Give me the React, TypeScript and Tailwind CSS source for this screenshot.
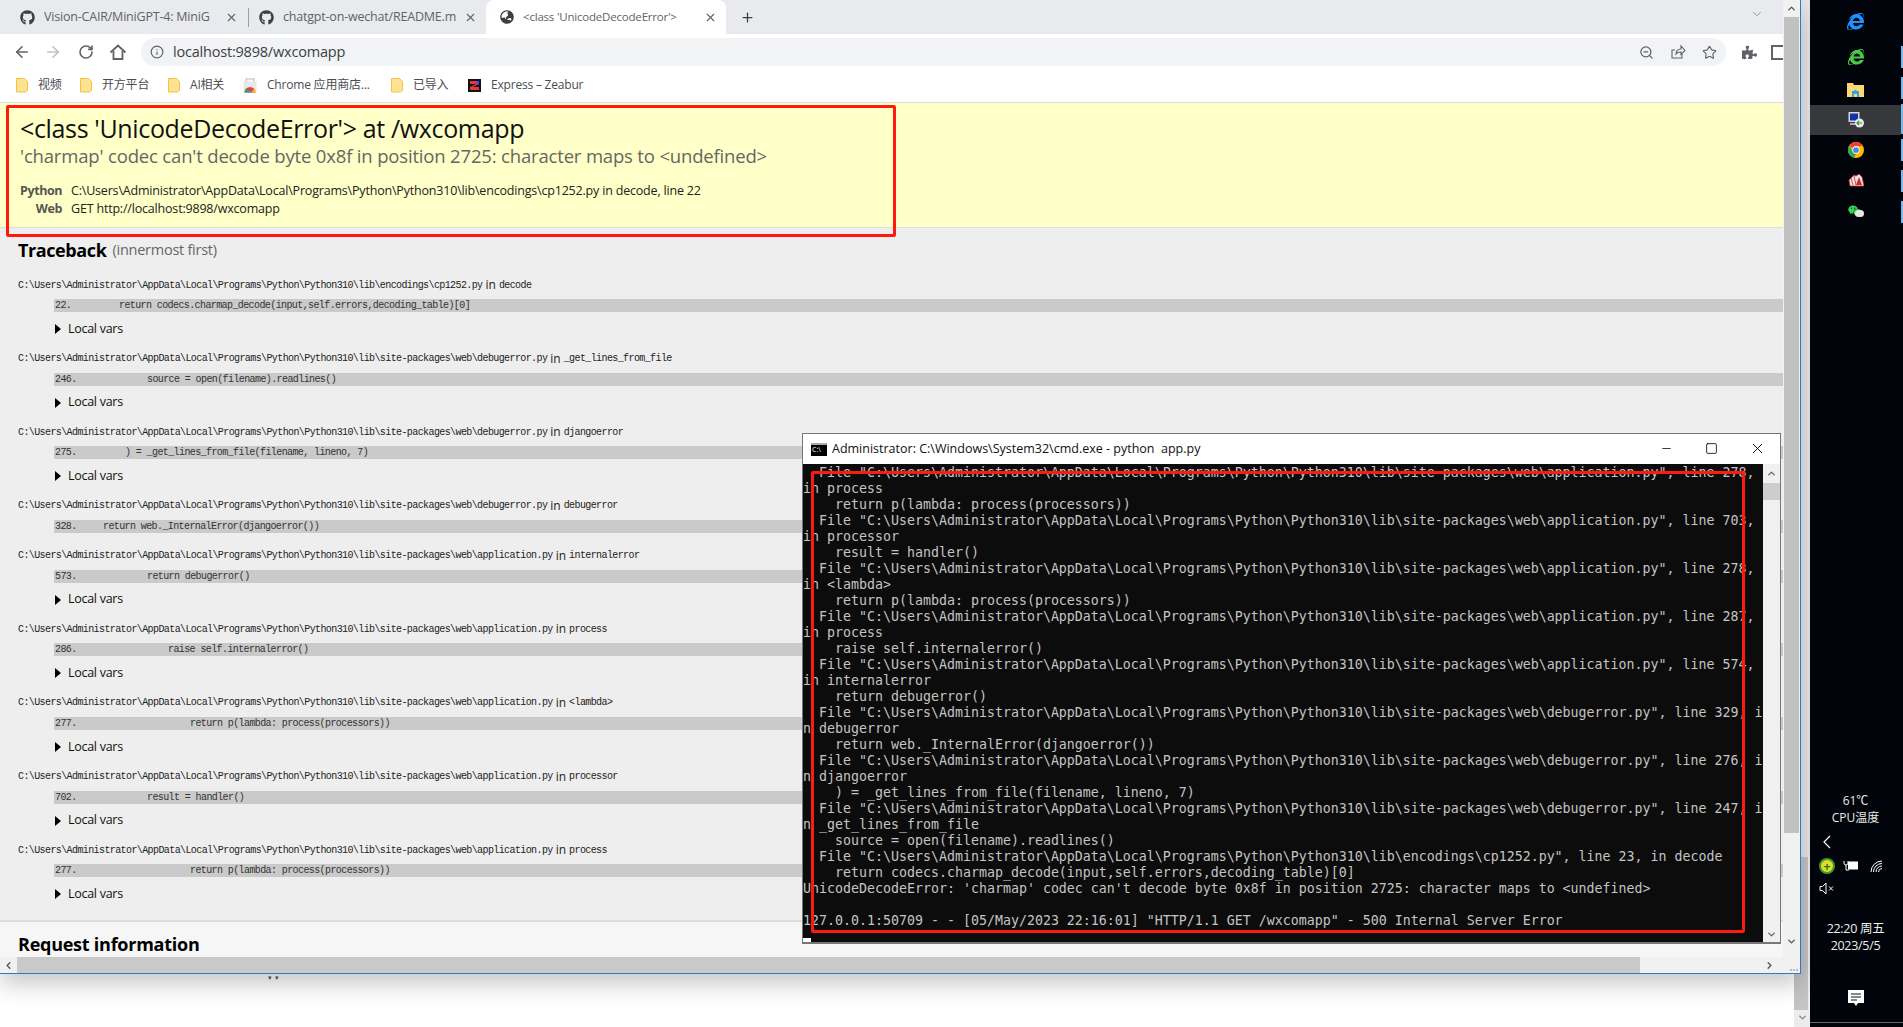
import React from "react";
import { ArrowLeft, ArrowRight, RotateCw, Info, ZoomOut, Star, X, Plus, ChevronDown, ChevronUp, ChevronLeft, ChevronRight, Minus, Square } from "lucide-react";
import { FaGithub, FaGlobeAsia, FaPuzzlePiece, FaInternetExplorer, FaWeixin } from "react-icons/fa";

const sans = "font-['Open_Sans','Noto_Sans_CJK_SC',sans-serif]";
const mono = "font-['Liberation_Mono',monospace] text-[10px] tracking-[-0.6px]";

const frames = [
  { path: "C:\\Users\\Administrator\\AppData\\Local\\Programs\\Python\\Python310\\lib\\encodings\\cp1252.py", fn: "decode", no: "22.", code: "return codecs.charmap_decode(input,self.errors,decoding_table)[0]", cls: "ml-[44px]", vars: true },
  { path: "C:\\Users\\Administrator\\AppData\\Local\\Programs\\Python\\Python310\\lib\\site-packages\\web\\debugerror.py", fn: "_get_lines_from_file", no: "246.", code: "source = open(filename).readlines()", cls: "ml-[72px]", vars: true },
  { path: "C:\\Users\\Administrator\\AppData\\Local\\Programs\\Python\\Python310\\lib\\site-packages\\web\\debugerror.py", fn: "djangoerror", no: "275.", code: ") = _get_lines_from_file(filename, lineno, 7)", cls: "ml-[50px]", vars: true },
  { path: "C:\\Users\\Administrator\\AppData\\Local\\Programs\\Python\\Python310\\lib\\site-packages\\web\\debugerror.py", fn: "debugerror", no: "328.", code: "return web._InternalError(djangoerror())", cls: "ml-[28px]", vars: false },
  { path: "C:\\Users\\Administrator\\AppData\\Local\\Programs\\Python\\Python310\\lib\\site-packages\\web\\application.py", fn: "internalerror", no: "573.", code: "return debugerror()", cls: "ml-[72px]", vars: true },
  { path: "C:\\Users\\Administrator\\AppData\\Local\\Programs\\Python\\Python310\\lib\\site-packages\\web\\application.py", fn: "process", no: "286.", code: "raise self.internalerror()", cls: "ml-[93px]", vars: true },
  { path: "C:\\Users\\Administrator\\AppData\\Local\\Programs\\Python\\Python310\\lib\\site-packages\\web\\application.py", fn: "<lambda>", no: "277.", code: "return p(lambda: process(processors))", cls: "ml-[115px]", vars: true },
  { path: "C:\\Users\\Administrator\\AppData\\Local\\Programs\\Python\\Python310\\lib\\site-packages\\web\\application.py", fn: "processor", no: "702.", code: "result = handler()", cls: "ml-[72px]", vars: true },
  { path: "C:\\Users\\Administrator\\AppData\\Local\\Programs\\Python\\Python310\\lib\\site-packages\\web\\application.py", fn: "process", no: "277.", code: "return p(lambda: process(processors))", cls: "ml-[115px]", vars: true },
];

const P = "C:\\Users\\Administrator\\AppData\\Local\\Programs\\Python\\Python310\\lib";
const term = [
  `  File "${P}\\site-packages\\web\\application.py", line 278,`,
  `in process`,
  `    return p(lambda: process(processors))`,
  `  File "${P}\\site-packages\\web\\application.py", line 703,`,
  `in processor`,
  `    result = handler()`,
  `  File "${P}\\site-packages\\web\\application.py", line 278,`,
  `in <lambda>`,
  `    return p(lambda: process(processors))`,
  `  File "${P}\\site-packages\\web\\application.py", line 287,`,
  `in process`,
  `    raise self.internalerror()`,
  `  File "${P}\\site-packages\\web\\application.py", line 574,`,
  `in internalerror`,
  `    return debugerror()`,
  `  File "${P}\\site-packages\\web\\debugerror.py", line 329, i`,
  `n debugerror`,
  `    return web._InternalError(djangoerror())`,
  `  File "${P}\\site-packages\\web\\debugerror.py", line 276, i`,
  `n djangoerror`,
  `    ) = _get_lines_from_file(filename, lineno, 7)`,
  `  File "${P}\\site-packages\\web\\debugerror.py", line 247, i`,
  `n _get_lines_from_file`,
  `    source = open(filename).readlines()`,
  `  File "${P}\\encodings\\cp1252.py", line 23, in decode`,
  `    return codecs.charmap_decode(input,self.errors,decoding_table)[0]`,
  `UnicodeDecodeError: 'charmap' codec can't decode byte 0x8f in position 2725: character maps to <undefined>`,
  ``,
  `127.0.0.1:50709 - - [05/May/2023 22:16:01] "HTTP/1.1 GET /wxcomapp" - 500 Internal Server Error`,
];

function Tab({ icon, title, active, cls }: { icon: React.ReactNode; title: string; active?: boolean; cls: string }) {
  return (
    <div className={`flex h-full items-center ${cls} ${active ? "bg-white rounded-t-lg" : ""}`}>
      <span className="w-[15px] h-[15px] flex items-center justify-center text-[#3c4043]">{icon}</span>
      <span className={`ml-[9px] w-[174px] overflow-hidden whitespace-nowrap text-[#5f6368] ${active ? "text-[11.5px]" : "text-[12.5px]"} tracking-[-0.2px]`}>{title}</span>
      <X size={13} className="ml-[7px] text-[#5f6368]" strokeWidth={2} />
    </div>
  );
}

function Folder() {
  return (
    <svg width="12" height="15" viewBox="0 0 12 15" className="shrink-0">
      <path d="M0.5 0.5h8l3 3v9l-2 1.500h-9z" fill="#fde293" stroke="#f5c242" strokeWidth="1" />
    </svg>
  );
}

function ChromeIcon({ size = 16 }: { size?: number }) {
  return (
    <svg width={size} height={size} viewBox="0 0 24 24">
      <circle cx="12" cy="12" r="12" fill="#fbbc04" />
      <path d="M12 0a12 12 0 0 1 10.4 6H12a6 6 0 0 0-5.6 3.8L2.2 4.6A12 12 0 0 1 12 0z" fill="#ea4335" />
      <path d="M1.9 5.3 7 14a6 6 0 0 0 5 4l-3 5.700A12 12 0 0 1 1.900 5.300z" fill="#34a853" />
      <circle cx="12" cy="12" r="5.500" fill="#fff" />
      <circle cx="12" cy="12" r="4.300" fill="#4285f4" />
    </svg>
  );
}

function StoreIcon() {
  return (
    <svg width="14" height="15" viewBox="0 0 14 15" className="shrink-0">
      <path d="M3 4V1h8v3" fill="none" stroke="#bbb" strokeWidth="1.200" />
      <rect x="0.500" y="3.500" width="13" height="11" fill="#e8e8e8" />
      <path d="M1.500 14.500a5.500 5.500 0 0 1 11 0z" fill="#ea4335" />
      <path d="M1.500 14.500a5.500 5.500 0 0 1 2.500-4.600l2 4.600z" fill="#34a853" />
      <path d="M12.500 14.500a5.500 5.500 0 0 0-1.500-3.700L8 14.500z" fill="#fbbc04" />
      <path d="M4.700 14.500a2.300 2.300 0 0 1 4.600 0z" fill="#4285f4" />
    </svg>
  );
}

function Bookmark({ icon, text, cls }: { icon: React.ReactNode; text: string; cls: string }) {
  return (
    <div className={`flex items-center gap-[10px] ${cls}`}>
      {icon}
      <span className="text-[12px] text-[#4a4d51] tracking-[-0.2px] whitespace-nowrap">{text}</span>
    </div>
  );
}

function Frame({ f }: { f: (typeof frames)[number] }) {
  return (
    <div className={`pt-[2px] ${f.vars ? "h-[73.6px]" : "h-[50px]"}`}>
      <div className="h-[14px] flex items-center pl-[18px] text-[#222] whitespace-pre">
        <span className={mono}>{f.path}</span>
        <span className="text-[12px] mx-[3px]">in</span>
        <span className={mono}>{f.fn}</span>
      </div>
      <div className="mt-[7px] ml-[54px] h-[13px] bg-[#cacaca] flex items-center pl-px whitespace-pre text-[#333]">
        <span className={`${mono} w-[20px]`}>{f.no}</span>
        <span className={`${mono} ${f.cls}`}>{f.code}</span>
      </div>
      {f.vars && (
        <div className="mt-[10px] h-[14px] flex items-center pl-[55px] text-[#111]">
          <span className="w-0 h-0 border-y-[5px] border-y-transparent border-l-[6px] border-l-black" />
          <span className="ml-[7px] text-[12.5px] tracking-[-0.28px]">Local vars</span>
        </div>
      )}
    </div>
  );
}

function TaskIcon({ children, active }: { children: React.ReactNode; active?: boolean }) {
  return (
    <div className={`h-[30.500px] flex items-center justify-center ${active ? "bg-[#36383b]" : ""}`}>
      {children}
    </div>
  );
}

export default function App() {
  return (
    <div className={`relative w-[1903px] h-[1027px] overflow-hidden bg-white flex ${sans}`}>
      {/* desktop: window behind */}
      <div className="w-[1810px] shrink-0 relative">
        <div className="absolute right-0 top-0 bottom-0 w-[16px] bg-[#ececec] flex flex-col items-center">
          <div className="w-full h-[857px] bg-[#e6e6e6]" />
          <div className="w-[14px] h-[153px] bg-[#c4c4c4] mr-[2px]" />
          <ChevronDown size={11} className="mt-[2px] text-[#888]" strokeWidth={3} />
        </div>
        <div className="absolute left-[268px] top-[974px] text-[7px] text-[#555] tracking-[3px] leading-none">▾▾</div>

        {/* browser window */}
        <div className="relative w-[1801px] h-[974px] flex border-r border-b border-[#2b7cc4] bg-white shadow-[0_10px_22px_rgba(0,0,0,0.22)]">
          <div className="w-[1783px] flex flex-col">
            <div className="h-[34px] bg-[#e8eaed] flex items-center relative">
              <Tab cls="pl-[20px] w-[248px]" icon={<FaGithub size={15} />} title="Vision-CAIR/MiniGPT-4: MiniG" />
              <div className="w-px h-[19px] bg-[#9aa0a6]" />
              <Tab cls="pl-[10px] w-[237px]" icon={<FaGithub size={15} />} title="chatgpt-on-wechat/README.m" />
              <Tab active cls="pl-[13px] w-[240px]" icon={<FaGlobeAsia size={14} />} title="<class 'UnicodeDecodeError'>" />
              <Plus size={15} className="ml-[14px] text-[#3c4043]" strokeWidth={2} />
              <ChevronDown size={14} className="absolute left-[1750px] top-[7px] text-[#888]" strokeWidth={1.500} />
            </div>
            <div className="h-[34px] flex items-center bg-white pl-[13px] pt-[2px]">
              <ArrowLeft size={18} className="text-[#5f6368]" strokeWidth={2.200} />
              <ArrowRight size={18} className="ml-[13px] text-[#bdc1c6]" strokeWidth={2.200} />
              <RotateCw size={16} className="ml-[16px] text-[#5f6368]" strokeWidth={2.400} />
              <svg width="18" height="18" viewBox="0 0 18 18" fill="none" stroke="#5f6368" strokeWidth="1.800" className="ml-[15px]">
                <path d="M1.500 9.500 9 2.500l7.500 7" />
                <path d="M4.500 8v8h9V8" />
              </svg>
              <div className="ml-[14px] w-[1587px] h-[28px] rounded-full bg-[#f1f3f4] flex items-center pl-[9px] pr-[9px]">
                <Info size={14} className="text-[#5f6368]" />
                <span className="ml-[9px] text-[14.5px] tracking-[-0.2px] text-[#3c4043]">localhost:9898/wxcomapp</span>
                <div className="ml-auto flex items-center gap-[16px] text-[#5f6368]">
                  <ZoomOut size={15} />
                  <svg width="16" height="16" viewBox="0 0 16 16" fill="none" stroke="#5f6368" strokeWidth="1.100">
                    <path d="M12 10v4H2V6h3" />
                    <path d="M6 10c0-3 2-5 5-5V2l4 4.500-4 4V8c-2 0-4 .5-5 2z" />
                  </svg>
                  <Star size={15} strokeWidth={1.800} />
                </div>
              </div>
              <FaPuzzlePiece size={15} className="ml-[16px] text-[#5f6368]" />
              <div className="ml-[14px] w-[12px] h-[15px] border-2 border-r-0 border-[#5f6368]" />
            </div>
            <div className="h-[35px] flex items-center bg-white border-b border-[#dadce0] relative">
              <Bookmark cls="ml-[16px] w-[64px]" icon={<Folder />} text="视频" />
              <Bookmark cls="w-[88px]" icon={<Folder />} text="开方平台" />
              <Bookmark cls="w-[75px]" icon={<Folder />} text="AI相关" />
              <Bookmark cls="w-[148px]" icon={<StoreIcon />} text="Chrome 应用商店..." />
              <Bookmark cls="w-[77px]" icon={<Folder />} text="已导入" />
              <Bookmark cls="gap-[8px]" icon={
                <svg width="13" height="13" viewBox="0 0 13 13">
                  <rect width="13" height="13" fill="#111" />
                  <path d="M2 2h9v3L5 8h6v3H2V8l6-3H2z" fill="#e53935" />
                  <path d="M8 2h3v3L8 6z" fill="#6a3df0" />
                </svg>
              } text="Express – Zeabur" />
            </div>

            {/* page */}
            <div className="h-[854px] overflow-hidden flex flex-col bg-[#eee]">
              <div className="h-[125px] shrink-0 bg-[#ffffc8] border-b border-[#ddd] pl-[20px] pt-[9px]">
                <div className="text-[25px] leading-[32px] text-[#111] tracking-[-0.35px] whitespace-nowrap">{"<class 'UnicodeDecodeError'> at /wxcomapp"}</div>
                <div className="text-[18.5px] leading-[24px] text-[#666] tracking-[-0.17px] whitespace-nowrap">{"'charmap' codec can't decode byte 0x8f in position 2725: character maps to <undefined>"}</div>
                <div className="mt-[14px] flex text-[12.5px] leading-[18px] text-[#222] tracking-[-0.19px] whitespace-nowrap">
                  <div className="w-[42px] text-right font-bold text-[#555] tracking-[-0.4px]">
                    <div>Python</div>
                    <div>Web</div>
                  </div>
                  <div className="ml-[9px]">
                    <div>C:\Users\Administrator\AppData\Local\Programs\Python\Python310\lib\encodings\cp1252.py in decode, line 22</div>
                    <div>GET http://localhost:9898/wxcomapp</div>
                  </div>
                </div>
              </div>
              <div className="h-[694px] shrink-0 pt-[10px] border-b-2 border-[#ddd]">
                <div className="h-[24px] flex items-center pl-[18px] whitespace-nowrap mb-[14px]">
                  <span className="text-[18px] font-bold text-black tracking-[-0.4px]">Traceback</span>
                  <span className="ml-[6px] text-[14.5px] text-[#666] tracking-[-0.25px]">(innermost first)</span>
                </div>
                {frames.map((f, i) => <Frame key={i} f={f} />)}
              </div>
              <div className="flex-1 bg-[#f6f6f6] pl-[18px] pt-[8px]">
                <div className="text-[18px] font-bold leading-[28px] text-black tracking-[-0.25px] whitespace-nowrap">Request information</div>
              </div>
            </div>

            {/* horizontal scrollbar */}
            <div className="h-[16px] flex items-center bg-[#f1f1f1]">
              <ChevronLeft size={11} strokeWidth={3} className="mx-[3px] text-[#555]" />
              <div className="w-[1623px] h-full bg-[#c9c9c9]" />
              <ChevronRight size={11} strokeWidth={3} className="ml-auto mr-[8px] text-[#555]" />
            </div>
          </div>
          {/* vertical scrollbar */}
          <div className="flex-1 flex flex-col bg-[#f1f1f1]">
            <div className="h-[17px] flex items-center justify-center"><ChevronUp size={11} strokeWidth={3} className="text-[#555]" /></div>
            <div className="h-[816px] mx-px bg-[#c1c1c1]" />
            <div className="flex-1 flex items-end justify-center pb-[20px]"><ChevronDown size={11} strokeWidth={3} className="text-[#555]" /></div>
            <div className="h-[6px] flex justify-end pr-[2px] gap-px items-end pb-[2px]">
              <span className="w-[2px] h-[2px] bg-[#bbb]" />
              <span className="w-[2px] h-[2px] bg-[#bbb]" />
              <span className="w-[2px] h-[2px] bg-[#bbb]" />
            </div>
          </div>
        </div>

        {/* red box over the error header */}
        <div className="absolute left-[6px] top-[105px] w-[890px] h-[132px] border-[3px] border-[#ff1a0f] rounded-[2px]" />

        {/* terminal window */}
        <div className="absolute left-[802px] top-[433px] w-[979px] h-[511px] border border-[#777] border-b-2 flex flex-col bg-white">
          <div className="h-[30px] shrink-0 flex items-center pl-[8px] relative">
            <div className="w-[16px] h-[13px] bg-black border-t-2 border-[#aaa] text-[7px] leading-[10px] text-white pl-[1px]">C:\</div>
            <span className="ml-[5px] text-[12.5px] text-[#111] whitespace-pre tracking-[0px]">{"Administrator: C:\\Windows\\System32\\cmd.exe - python  app.py"}</span>
            <Minus size={13} className="absolute left-[857px] top-[8px] text-black" strokeWidth={1.400} />
            <Square size={13} className="absolute left-[902px] top-[8px] text-black" strokeWidth={1.500} />
            <X size={17} className="absolute left-[946px] top-[6px] text-black" strokeWidth={1.300} />
          </div>
          <div className="flex-1 flex min-h-0 bg-[#0c0c0c] relative">
            <pre className="w-[960px] overflow-hidden pt-[1px] font-['DejaVu_Sans_Mono',monospace] text-[13.29px] leading-[16px] text-[#c4c4c4]">{term.join("\n")}</pre>
            <div className="absolute left-0 bottom-0 w-[8px] h-[4px] bg-white" />
            <div className="flex-1 bg-[#f0f0f0] flex flex-col items-center">
              <ChevronUp size={11} strokeWidth={3} className="mt-[4px] text-[#666]" />
              <div className="mt-[4px] w-full h-[17px] bg-[#cdcdcd]" />
              <ChevronDown size={11} strokeWidth={3} className="mt-auto mb-[2px] text-[#666]" />
            </div>
          </div>
        </div>

        {/* red box over the terminal */}
        <div className="absolute left-[811px] top-[471px] w-[934px] h-[462px] border-[3px] border-[#ff1a0f] rounded-[2px]" />
      </div>

      {/* taskbar */}
      <aside className="flex-1 bg-[#01050b] flex relative">
        <div className="w-[91px] flex flex-col h-full">
          <div className="pt-[4px] h-[39px] flex justify-center items-center">
            <FaInternetExplorer size={17} className="text-[#1e90ff]" />
          </div>
          <div className="h-[35px] flex justify-center items-center">
            <FaInternetExplorer size={16} className="text-[#4cc94a]" />
          </div>
          <TaskIcon>
            <svg width="17" height="15" viewBox="0 0 17 15">
              <path d="M0 1h6l1 2h10v12H0z" fill="#fcd774" />
              <path d="M5 15V9h2l1.500-1.500L10 9h2v6h-2v-3H7v3z" fill="#29a9e0" />
            </svg>
          </TaskIcon>
          <div className="h-[30px] flex items-center justify-center bg-[#36383b]">
            <svg width="16" height="16" viewBox="0 0 16 16">
              <rect x="0.500" y="0" width="11" height="10" fill="#d8d8d8" />
              <rect x="2" y="1.500" width="8" height="7" fill="#1330b0" />
              <rect x="2" y="11" width="8" height="2" fill="#aaa" />
              <circle cx="11.500" cy="11" r="4.500" fill="#e8e8e8" />
              <path d="M9 11h5M11 9l-2 2 2 2" stroke="#2a9d4a" strokeWidth="1.200" fill="none" />
            </svg>
          </div>
          <TaskIcon><ChromeIcon size={16} /></TaskIcon>
          <TaskIcon>
            <svg width="16" height="13" viewBox="0 0 16 13">
              <path d="M1 6l5-5 2 1 3-2 3 3 2 9H2z" fill="#e9e4e4" stroke="#d02828" strokeWidth="0.800" />
              <path d="M3 4l2 7M6 2l2 9" stroke="#d02828" strokeWidth="0.800" />
              <path d="M11 3l3 8H8z" fill="#d02828" />
            </svg>
          </TaskIcon>
          <TaskIcon>
            <div className="relative w-[16px] h-[13px]">
              <FaWeixin size={14} className="text-[#3fd25a] absolute left-0 top-0" />
              <div className="absolute right-0 bottom-0 w-[9px] h-[7px] rounded-full bg-[#e6e6e6]" />
            </div>
          </TaskIcon>

          <div className="mt-[566px] flex flex-col items-center text-[12px] leading-[17px] text-[#e8e8e8]">
            <div>61℃</div>
            <div>CPU温度</div>
          </div>
          <div className="mt-[9px] pl-[12px]">
            <svg width="9" height="14" viewBox="0 0 9 14" fill="none" stroke="#fff" strokeWidth="1.200"><path d="M8 1 2 7l6 6" /></svg>
          </div>
          <div className="mt-[9px] flex items-center pl-[9px]">
            <div className="w-[16px] h-[16px] rounded-full bg-[#e2dc22] border-[2px] border-[#3d9a3a] flex items-center justify-center text-[13px] leading-none font-bold text-[#1f7a2a]">+</div>
            <svg width="16" height="12" viewBox="0 0 16 12" className="ml-[8px]">
              <rect x="5" y="1.500" width="10" height="8" fill="#fff" />
              <path d="M1 1v2a2 2 0 0 0 4 0V1M3 5v5h3" stroke="#fff" fill="none" strokeWidth="1" />
            </svg>
            <svg width="13" height="13" viewBox="0 0 13 13" fill="none" stroke="#fff" strokeWidth="1" className="ml-[11px]">
              <path d="M1 12a11 11 0 0 1 11-11M3.500 12A8.500 8.500 0 0 1 12 3.500M6 12a6 6 0 0 1 6-6M8.500 12A3.500 3.500 0 0 1 12 8.500" />
            </svg>
          </div>
          <div className="mt-[8px] pl-[9px]">
            <svg width="15" height="13" viewBox="0 0 15 13" fill="none" stroke="#fff" strokeWidth="1">
              <path d="M1 4.500h2.500L7 1v11L3.500 8.500H1z" />
              <path d="M10 4.500l4 4M14 4.500l-4 4" />
            </svg>
          </div>
          <div className="mt-[25px] flex flex-col items-center text-[12.5px] leading-[17px] text-[#eee] tracking-[-0.3px]">
            <div>22:20 周五</div>
            <div>2023/5/5</div>
          </div>
          <div className="mt-[36px] flex justify-center">
            <svg width="16" height="17" viewBox="0 0 16 17">
              <path d="M0 0h16v13h-6l-2 3-2-3H0z" fill="#fff" />
              <path d="M3 4h10M3 7h10M3 10h6" stroke="#111" strokeWidth="1" />
            </svg>
          </div>
          <div className="mt-auto mb-[4px] h-px w-full bg-[#666]" />
        </div>
        <div className="flex-1 flex flex-col pt-[46px]">
          <div className="h-[22px] bg-[#76b9ed]" />
          <div className="mt-[9px] h-[22px] bg-[#76b9ed]" />
          <div className="mt-[5px] h-[30px] bg-[#76b9ed]" />
          <div className="mt-[5px] h-[22px] bg-[#76b9ed]" />
          <div className="mt-[9px] h-[22px] bg-[#76b9ed]" />
          <div className="mt-[9px] h-[22px] bg-[#76b9ed]" />
          <div className="mt-auto mb-[4px] h-px w-full bg-[#666]" />
        </div>
      </aside>
    </div>
  );
}
